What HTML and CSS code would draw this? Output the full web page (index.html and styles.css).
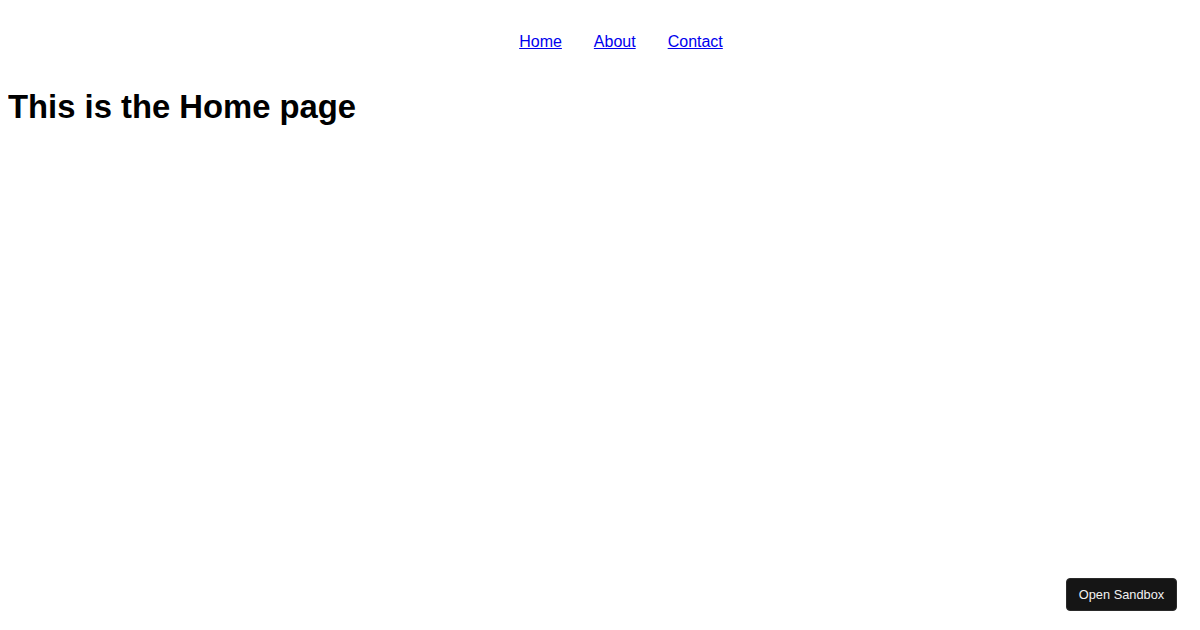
FILE: index.html
```html
<!DOCTYPE html>
<html>
<head>
<meta charset="utf-8">
<link rel="stylesheet" href="styles.css">
</head>
<body>
<nav class="nav">
  <ul class="nav-list">
    <li><a href="#">Home</a></li>
    <li><a href="#">About</a></li>
    <li><a href="#">Contact</a></li>
  </ul>
</nav>
<h1 class="title">This is the Home page</h1>
<button class="sandbox-btn">Open Sandbox</button>
</body>
</html>
```

FILE: styles.css
```css
html, body {
  background: #fff;
}
body {
  margin: 8px;
  font-family: "Liberation Sans", Arial, sans-serif;
  color: #000;
}
.nav {
  padding: 25px 0 16px;
}
.nav-list {
  display: flex;
  justify-content: center;
  gap: 32px;
  list-style: none;
  margin: 0;
  padding: 0 0 0 42px;
  font-size: 16px;
}
.nav-list a {
  color: #0000ee;
  text-decoration: underline;
}
.title {
  font-size: 32.8px;
  font-weight: bold;
  margin: 21px 0;
}
.sandbox-btn {
  position: fixed;
  right: 23px;
  bottom: 19px;
  width: 111px;
  height: 33px;
  padding: 0;
  background: #151515;
  color: #f2f2f2;
  border: 1px solid #2a2a2a;
  border-radius: 4px;
  font-family: "Liberation Sans", Arial, sans-serif;
  font-size: 12.8px;
  cursor: pointer;
}
```
